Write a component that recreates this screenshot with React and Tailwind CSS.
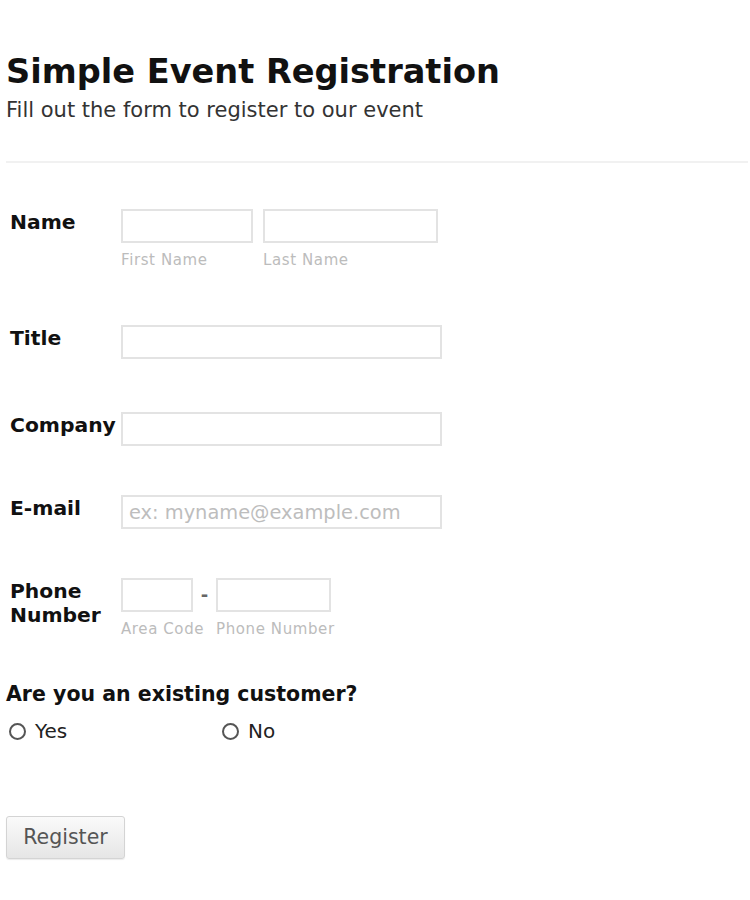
import React from 'react';

const font = { fontFamily: '"DejaVu Sans", sans-serif' };

const Label = ({ children }) => (
    <div className="w-[115px] shrink-0 pl-[4px] text-[20.3px] font-bold leading-[24px] text-[#111]">{children}</div>
);

const Field = ({ className = '', placeholder }) => (
    <input
        type="text"
        placeholder={placeholder}
        className={`h-[34px] border-2 border-[#e3e3e3] bg-white px-[6px] text-[19.4px] text-[#333] placeholder:text-[#bdbdbd] focus:outline-none ${className}`}
    />
);

const Sub = ({ children, className = '' }) => (
    <div className={`mt-[8px] whitespace-nowrap text-[15px] leading-[18px] tracking-[0.6px] text-[#bcbcbc] ${className}`}>{children}</div>
);

export default function App() {
    return (
        <div className="min-h-[900px] bg-white pl-[6px] pt-[50px]" style={font}>
            <h1 className="text-[33.6px] font-bold leading-[44px] text-[#111]">Simple Event Registration</h1>
            <p className="mt-[2px] text-[21px] leading-[28px] text-[#333]">Fill out the form to register to our event</p>
            <div className="mt-[37px] mr-[2px] h-[2px] bg-[#f1f1f1]" />

            <div className="mt-[46px] flex">
                <div className="pt-[1px]"><Label>Name</Label></div>
                <div className="flex gap-[10px]">
                    <div>
                        <Field className="w-[132px]" />
                        <Sub>First Name</Sub>
                    </div>
                    <div>
                        <Field className="w-[175px]" />
                        <Sub>Last Name</Sub>
                    </div>
                </div>
            </div>

            <div className="mt-[56px] flex items-start">
                <div className="pt-[1px]"><Label>Title</Label></div>
                <Field className="w-[321px]" />
            </div>

            <div className="mt-[53px] flex items-start">
                <div className="pt-[1px]"><Label>Company</Label></div>
                <Field className="w-[321px]" />
            </div>

            <div className="mt-[49px] flex items-start">
                <div className="pt-[1px]"><Label>E-mail</Label></div>
                <Field className="w-[321px]" placeholder="ex: myname@example.com" />
            </div>

            <div className="mt-[49px] flex items-start">
                <div className="pt-[1px]"><Label>Phone Number</Label></div>
                <div className="flex items-start">
                    <div className="w-[72px] shrink-0">
                        <Field className="w-[72px]" />
                        <Sub className="tracking-[0.5px]">Area Code</Sub>
                    </div>
                    <div className="w-[23px] shrink-0 pt-[3px] text-center text-[18px] font-bold text-[#666]">-</div>
                    <div>
                        <Field className="w-[115px]" />
                        <Sub className="tracking-[0.5px]">Phone Number</Sub>
                    </div>
                </div>
            </div>

            <div className="mt-[44px] text-[20.5px] font-bold leading-[24px] text-[#111]">Are you an existing customer?</div>
            <div className="mt-[13px] flex text-[20px] leading-[24px] text-[#222]">
                <label className="flex w-[216px] items-center gap-[9px] pl-[3px]">
                    <span className="h-[17px] w-[17px] rounded-full border-2 border-[#555]" />
                    Yes
                </label>
                <label className="flex items-center gap-[9px]">
                    <span className="h-[17px] w-[17px] rounded-full border-2 border-[#555]" />
                    No
                </label>
            </div>

            <button className="mt-[73px] h-[43px] w-[119px] rounded-[3px] border border-[#d4d4d4] bg-gradient-to-b from-[#fafafa] to-[#e6e6e6] text-[20.5px] text-[#555] shadow-[0_1px_1px_rgba(0,0,0,0.08)]">
                Register
            </button>
        </div>
    );
}
